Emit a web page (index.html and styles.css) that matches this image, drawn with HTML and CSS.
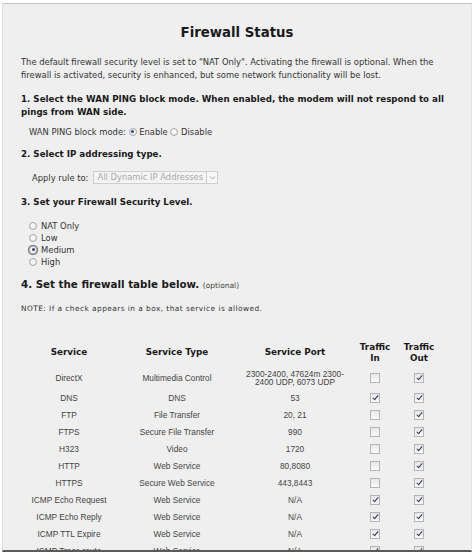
FILE: index.html
```html
<!DOCTYPE html>
<html>
<head>
<meta charset="utf-8">
<link rel="stylesheet" href="styles.css">
</head>
<body>
<div class="panel">
  <h1 class="title">Firewall Status</h1>
  <p class="intro">The default firewall security level is set to "NAT Only". Activating the firewall is optional. When the firewall is activated, security is enhanced, but some network functionality will be lost.</p>
  <h2 class="step s1">1. Select the WAN PING block mode. When enabled, the modem will not respond to all pings from WAN side.</h2>
  <div class="wan">WAN PING block mode: <span class="radio on"></span> Enable <span class="radio"></span> Disable</div>
  <h2 class="step s2">2. Select IP addressing type.</h2>
  <div class="apply"><span class="lbl">Apply rule to:</span> <span class="select"><span class="seltext">All Dynamic IP Addresses</span><span class="selbtn"><svg width="7" height="5" viewBox="0 0 7 5"><path d="M1 1.5 L3.5 4 L6 1.5" fill="none" stroke="#9a9a9a" stroke-width="1"/></svg></span></span></div>
  <h2 class="step s3">3. Set your Firewall Security Level.</h2>
  <div class="levels">
    <div class="lvl"><span class="radio"></span>NAT Only</div>
    <div class="lvl"><span class="radio"></span>Low</div>
    <div class="lvl"><span class="radio on focus"></span>Medium</div>
    <div class="lvl"><span class="radio"></span>High</div>
  </div>
  <h2 class="step s4">4. Set the firewall table below. <span class="opt">(optional)</span></h2>
  <p class="note">NOTE: If a check appears in a box, that service is allowed.</p>
  <div class="table">
    <div class="row head">
      <div>Service</div><div>Service Type</div><div>Service Port</div><div>Traffic<br>In</div><div>Traffic<br>Out</div>
    </div>
    <div class="row tall">
      <div>DirectX</div><div>Multimedia Control</div><div class="two">2300-2400, 47624m 2300-<br>2400 UDP, 6073 UDP</div><div><span class="cb"></span></div><div><span class="cb on"></span></div>
    </div>
    <div class="row"><div>DNS</div><div>DNS</div><div>53</div><div><span class="cb on"></span></div><div><span class="cb on"></span></div></div>
    <div class="row"><div>FTP</div><div>File Transfer</div><div>20, 21</div><div><span class="cb"></span></div><div><span class="cb on"></span></div></div>
    <div class="row"><div>FTPS</div><div>Secure File Transfer</div><div>990</div><div><span class="cb"></span></div><div><span class="cb on"></span></div></div>
    <div class="row"><div>H323</div><div>Video</div><div>1720</div><div><span class="cb"></span></div><div><span class="cb on"></span></div></div>
    <div class="row"><div>HTTP</div><div>Web Service</div><div>80,8080</div><div><span class="cb"></span></div><div><span class="cb on"></span></div></div>
    <div class="row"><div>HTTPS</div><div>Secure Web Service</div><div>443,8443</div><div><span class="cb"></span></div><div><span class="cb on"></span></div></div>
    <div class="row"><div>ICMP Echo Request</div><div>Web Service</div><div>N/A</div><div><span class="cb on"></span></div><div><span class="cb on"></span></div></div>
    <div class="row"><div>ICMP Echo Reply</div><div>Web Service</div><div>N/A</div><div><span class="cb on"></span></div><div><span class="cb on"></span></div></div>
    <div class="row"><div>ICMP TTL Expire</div><div>Web Service</div><div>N/A</div><div><span class="cb on"></span></div><div><span class="cb on"></span></div></div>
    <div class="row"><div>ICMP Trace route</div><div>Web Service</div><div>N/A</div><div><span class="cb on"></span></div><div><span class="cb on"></span></div></div>
  </div>
</div>
</body>
</html>
```

FILE: styles.css
```css
html, body {
  margin: 0;
  padding: 0;
  background: #ffffff;
}
body {
  font-family: "DejaVu Sans", Verdana, sans-serif;
  color: #222;
}
.panel {
  margin: 3px 2px 0 2px;
  height: 546px;
  overflow: hidden;
  background: #efefef;
  border-top: 1px solid #c4c4c4;
  border-left: 1px solid #dcdcdc;
  border-right: 1px solid #e4e4e4;
  border-bottom: 2px solid #5a5a5a;
  padding: 0 18px 0 18px;
}
.title {
  margin: 21px 0 0 0;
  font-size: 13.3px;
  line-height: 16px;
  text-align: center;
  font-weight: bold;
  color: #1a1a1a;
}
.intro {
  margin: 15px -8px 0 0;
  font-size: 8.4px;
  line-height: 12.5px;
  color: #333;
}
.step {
  margin: 0 -8px 0 0;
  font-size: 8.7px;
  line-height: 13px;
  font-weight: bold;
  color: #1a1a1a;
}
.s1 { margin-top: 12px; }
.s2 { margin-top: 9.5px; }
.s3 { margin-top: 10.5px; }
.s4 { margin-top: 10.5px; font-size: 10.3px; }
.opt {
  font-weight: normal;
  font-size: 7.5px;
  color: #444;
}
.wan {
  margin: 5.5px 0 0 8px;
  font-size: 8.4px;
  line-height: 14px;
  color: #333;
}
.radio {
  display: inline-block;
  box-sizing: border-box;
  width: 8px;
  height: 8px;
  border-radius: 50%;
  border: 1px solid #a8a8a8;
  background: radial-gradient(circle at 50% 40%, #ffffff 0, #e4e4e4 100%);
  vertical-align: -1px;
  position: relative;
}
.radio.on::after {
  content: "";
  position: absolute;
  left: 1.5px;
  top: 1.5px;
  width: 3px;
  height: 3px;
  border-radius: 50%;
  background: #2b4a78;
}
.radio.focus {
  outline: 1px solid #6a6a6a;
  outline-offset: 0;
  border-radius: 40%;
}
.apply {
  margin: 8.5px 0 0 11px;
  height: 16px;
  display: flex;
  align-items: center;
  gap: 5px;
  font-size: 8.4px;
  color: #333;
}
.select {
  display: inline-flex;
  align-items: center;
  height: 13px;
  box-sizing: border-box;
  border: 1px solid #cfcfcf;
  background: #f4f4f4;
}
.seltext {
  color: #a9a9a9;
  padding: 0 3px 0 3px;
  line-height: 11px;
}
.selbtn {
  display: inline-flex;
  align-items: center;
  justify-content: center;
  width: 10px;
  height: 11px;
  border-left: 1px solid #cfcfcf;
  background: #f8f8f8;
}
.levels {
  margin: 10.5px 0 0 8px;
  font-size: 8.4px;
  line-height: 12px;
  color: #333;
}
.lvl .radio {
  margin-right: 4px;
}
.note {
  margin: 10.5px 0 0 0;
  font-size: 7.4px;
  letter-spacing: 0.45px;
  line-height: 11px;
  color: #333;
}
.table {
  margin: 27px 0 0 0;
  font-family: "Liberation Sans", Arial, sans-serif;
  font-size: 8.3px;
  color: #444;
}
.row {
  display: grid;
  grid-template-columns: 96px 120px 116px 44px 44px;
  height: 17px;
  align-items: center;
  text-align: center;
}
.row > div {
  line-height: 10px;
  white-space: nowrap;
}
.row > div.two {
  line-height: 8.5px;
}
.row.head {
  height: 24px;
  margin-bottom: 2px;
  font-family: "DejaVu Sans", Verdana, sans-serif;
  font-size: 8.8px;
  font-weight: bold;
  color: #1a1a1a;
}
.row.head > div {
  line-height: 11px;
}
.row.tall {
  height: 23px;
}
.cb {
  display: inline-block;
  box-sizing: border-box;
  width: 10px;
  height: 10px;
  border: 1px solid #b4b4b4;
  background: linear-gradient(#e6e6e6, #fbfbfb);
  vertical-align: middle;
  position: relative;
}
.cb.on::after {
  content: "";
  position: absolute;
  left: 3px;
  top: 0px;
  width: 2px;
  height: 5px;
  border: solid #2a3a5e;
  border-width: 0 1.5px 1.5px 0;
  transform: rotate(40deg);
}
```
